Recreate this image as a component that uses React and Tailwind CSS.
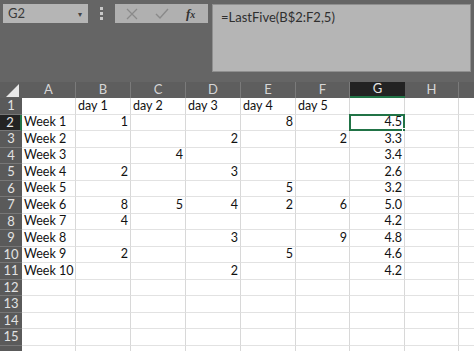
import React from "react";

const cols = [
  { k: "A", w: 54 },
  { k: "B", w: 55 },
  { k: "C", w: 55 },
  { k: "D", w: 55 },
  { k: "E", w: 55 },
  { k: "F", w: 54 },
  { k: "G", w: 55 },
  { k: "H", w: 54 },
  { k: "", w: 20 },
];

const data = [
  ["", "day 1", "day 2", "day 3", "day 4", "day 5", "", "", ""],
  ["Week 1", "1", "", "", "8", "", "4.5", "", ""],
  ["Week 2", "", "", "2", "", "2", "3.3", "", ""],
  ["Week 3", "", "4", "", "", "", "3.4", "", ""],
  ["Week 4", "2", "", "3", "", "", "2.6", "", ""],
  ["Week 5", "", "", "", "5", "", "3.2", "", ""],
  ["Week 6", "8", "5", "4", "2", "6", "5.0", "", ""],
  ["Week 7", "4", "", "", "", "", "4.2", "", ""],
  ["Week 8", "", "", "3", "", "9", "4.8", "", ""],
  ["Week 9", "2", "", "", "5", "", "4.6", "", ""],
  ["Week 10", "", "", "2", "", "", "4.2", "", ""],
];

const heights = [17, 16, 17, 16, 17, 16, 17, 16, 17, 16, 17, 16, 17, 16, 17, 16];

export default function App() {
  const font = { fontFamily: "Lato, 'Liberation Sans', sans-serif" };
  return (
    <div className="w-[474px] h-[351px] overflow-hidden bg-[#656565] relative" style={font}>
      {/* top bar */}
      <div className="h-[82px] flex items-start pt-[4px]">
        <div className="ml-[3px] w-[85px] h-[19px] bg-[#b5b5b5] flex items-center justify-between px-[5px] text-[13px] text-[#3a3a3a]">
          <span>G2</span>
          <span className="text-[8px] text-[#444] mr-[1px]">▾</span>
        </div>
        <div className="w-[27px] h-[19px] flex flex-col items-center justify-center gap-[2px]">
          <span className="w-[3px] h-[3px] bg-[#c8c8c8]"></span>
          <span className="w-[3px] h-[3px] bg-[#c8c8c8]"></span>
          <span className="w-[3px] h-[3px] bg-[#c8c8c8]"></span>
        </div>
        <div className="w-[93px] h-[19px] bg-[#b0b0b0] flex items-center">
          <svg width="12" height="12" viewBox="0 0 12 12" className="ml-[11px]">
            <path d="M1 1 L11 11 M11 1 L1 11" stroke="#8a8a8a" strokeWidth="1.2" />
          </svg>
          <svg width="14" height="12" viewBox="0 0 14 12" className="ml-[17px]">
            <path d="M1 6 L5 10 L13 1" stroke="#8a8a8a" strokeWidth="1.4" fill="none" />
          </svg>
          <span className="ml-[17px] text-[13px] italic font-bold text-[#333]" style={{ fontFamily: "'Liberation Serif', serif" }}>
            f<span className="text-[10px]">x</span>
          </span>
        </div>
        <div className="ml-[4px] w-[259px] h-[68px] bg-[#b5b5b5] border border-[#8f8f8f] pl-[8px] pt-[3px] text-[13px] text-[#2f2f2f]">
          =LastFive(B$2:F2,5)
        </div>
      </div>

      {/* column header */}
      <div className="flex h-[16px] bg-[#5e5e5e]">
        <div className="w-[22px] shrink-0 relative">
          <svg width="14" height="13" viewBox="0 0 14 13" className="absolute right-[2px] bottom-[1px]">
            <polygon points="13,0 13,13 0,13" fill="#e8e8e8" />
          </svg>
        </div>
        {cols.map((c, i) => (
          <div
            key={i}
            style={{ width: c.w }}
            className={`shrink-0 flex items-center justify-center text-[13px] ${
              c.k === "G"
                ? "bg-[#232323] text-[#e6e6e6] border-b-2 border-b-[#217346]"
                : "text-[#d6d6d6] border-r border-r-[#7a7a7a]"
            }`}
          >
            {c.k}
          </div>
        ))}
      </div>

      {/* rows */}
      {heights.map((h, r) => {
        const row = data[r] || ["", "", "", "", "", "", "", "", ""];
        const selRow = r === 1;
        return (
          <div key={r} className="flex" style={{ height: h }}>
            <div
              className={`w-[22px] shrink-0 flex items-center justify-center text-[13px] border-b border-b-[#777] ${
                selRow ? "bg-[#232323] text-[#e8e8e8] border-r-2 border-r-[#217346]" : "bg-[#5a5a5a] text-[#e2e2e2]"
              }`}
            >
              {r < 15 ? r + 1 : ""}
            </div>
            {cols.map((c, ci) => {
              const v = row[ci];
              const isText = ci === 0 || r === 0;
              const sel = r === 1 && c.k === "G";
              return (
                <div
                  key={ci}
                  style={{ width: c.w }}
                  className={`shrink-0 bg-white border-r border-r-[#d8d8d8] border-b border-b-[#e2e2e2] flex items-center text-[12.5px] text-[#111] relative ${
                    isText ? "justify-start pl-[2px]" : "justify-end pr-[2px]"
                  }`}
                >
                  {v}
                  {sel && (
                    <>
                      <div className="absolute left-[-1px] top-[-1px] right-[-1px] bottom-[-1px] border-2 border-[#217346]"></div>
                      <div className="absolute right-[-3px] bottom-[-3px] w-[5px] h-[5px] bg-[#217346] border border-white"></div>
                    </>
                  )}
                </div>
              );
            })}
          </div>
        );
      })}
    </div>
  );
}
